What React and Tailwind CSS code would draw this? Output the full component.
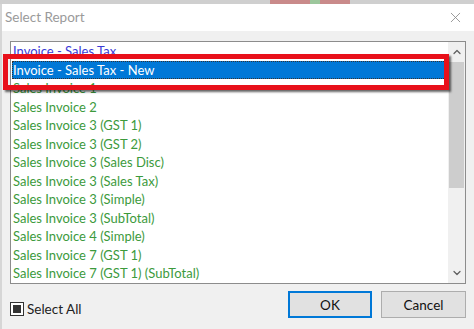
import { ChevronUp, ChevronDown, X } from 'lucide-react';

const ITEMS = [
  { label: 'Invoice - Sales Tax', color: 'blue' },
  { label: 'Invoice - Sales Tax - New', color: 'sel' },
  { label: 'Sales Invoice 1' },
  { label: 'Sales Invoice 2' },
  { label: 'Sales Invoice 3 (GST 1)' },
  { label: 'Sales Invoice 3 (GST 2)' },
  { label: 'Sales Invoice 3 (Sales Disc)' },
  { label: 'Sales Invoice 3 (Sales Tax)' },
  { label: 'Sales Invoice 3 (Simple)' },
  { label: 'Sales Invoice 3 (SubTotal)' },
  { label: 'Sales Invoice 4 (Simple)' },
  { label: 'Sales Invoice 7 (GST 1)' },
  { label: 'Sales Invoice 7 (GST 1) (SubTotal)' },
];

export default function App() {
  return (
    <div className="w-[474px] h-[329px] overflow-hidden bg-[#d6d6d6] flex flex-col text-[13px]" style={{ fontFamily: 'Lato, "Noto Sans", sans-serif' }}>
      {/* strip of whatever is behind the dialog */}
      <div className="h-[4px] shrink-0 flex">
        <div className="w-[270px] bg-[#cfcfcf]" />
        <div className="w-[40px] bg-[#c98a8a]" />
        <div className="w-[10px] bg-[#9cc79c]" />
        <div className="w-[30px] bg-[#c98a8a]" />
        <div className="flex-1 bg-[#cfcfcf]" />
      </div>

      <div className="flex-1 ml-[2px] flex flex-col bg-[#f0f0f0]">
        {/* title bar */}
        <div className="h-[27px] shrink-0 bg-white flex items-center justify-between pl-[3px] pr-[10px]">
          <span className="text-[#9a9a9a] text-[13.5px]">Select Report</span>
          <X size={17} strokeWidth={1.2} className="text-[#8a8a8a]" />
        </div>

        {/* list */}
        <div className="relative mt-[10px] ml-[8px] mr-[8px] h-[243px] border border-[#8c8c8c] bg-white flex">
          <div className="flex-1 pl-[1px] pr-[2px] overflow-hidden">
            {ITEMS.map((it, i) => (
              <div
                key={i}
                className={`h-[18.5px] leading-[18.5px] pl-[1px] whitespace-nowrap ${
                  it.color === 'sel'
                    ? 'bg-[#0078d7] text-white outline outline-1 outline-dotted outline-[#333] -outline-offset-1'
                    : it.color === 'blue'
                    ? 'text-[#3a3ad6]'
                    : 'text-[#3c9a3c]'
                }`}
              >
                {it.label}
              </div>
            ))}
          </div>
          {/* scrollbar */}
          <div className="w-[17px] bg-[#f0f0f0] flex flex-col items-center">
            <div className="h-[20px] flex items-center justify-center">
              <ChevronUp size={12} strokeWidth={2.5} className="text-[#606060]" />
            </div>
            <div className="w-[15px] h-[126px] bg-[#cdcdcd]" />
            <div className="flex-1" />
            <div className="h-[20px] flex items-center justify-center">
              <ChevronDown size={12} strokeWidth={2.5} className="text-[#606060]" />
            </div>
          </div>

          {/* red highlight callout */}
          <div className="absolute left-[-8px] top-[12px] w-[446px] h-[36px] border-[5px] border-[#e8101a] shadow-[2px_2px_2px_rgba(0,0,0,0.6)]" />
        </div>

        {/* footer */}
        <div className="flex items-center mt-[6px] ml-[8px] mr-[8px]">
          <div className="flex items-center gap-[3px] mt-[9px]">
            <div className="w-[14px] h-[14px] border border-[#333] bg-white flex items-center justify-center">
              <div className="w-[8px] h-[8px] bg-[#333]" />
            </div>
            <span className="text-[#222] text-[13.5px]">Select All</span>
          </div>
          <div className="flex-1" />
          <button className="w-[84px] h-[27px] bg-[#e1e1e1] border-2 border-[#0078d7] text-[#111] text-[13.5px]">OK</button>
          <button className="ml-[9px] w-[85px] h-[27px] bg-[#e1e1e1] border border-[#adadad] text-[#111] text-[13.5px]">Cancel</button>
        </div>
      </div>
    </div>
  );
}
